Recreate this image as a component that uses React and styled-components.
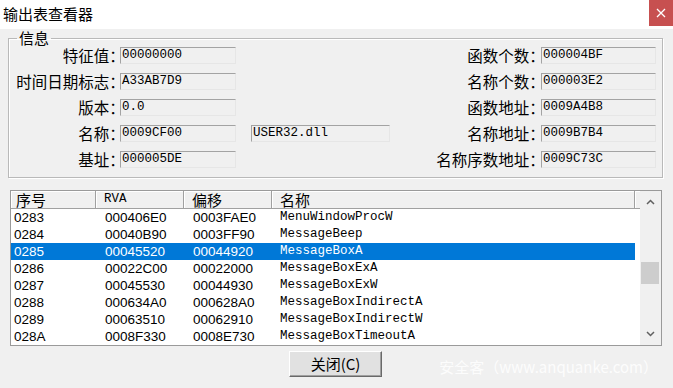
import React from 'react';
import styled, { createGlobalStyle } from 'styled-components';

const GlobalStyle = createGlobalStyle`
  html, body {
    margin: 0;
    padding: 0;
    background: #f0f0f0;
  }
  body {
    font-family: "Noto Sans CJK SC", "Liberation Sans", sans-serif;
    color: #000;
  }
`;

const leftFields = [
  { label: '特征值：', value: '00000000' },
  { label: '时间日期标志：', value: 'A33AB7D9' },
  { label: '版本：', value: '0.0' },
  { label: '名称：', value: '0009CF00', extra: 'USER32.dll' },
  { label: '基址：', value: '000005DE' }
];

const rightFields = [
  { label: '函数个数：', value: '000004BF' },
  { label: '名称个数：', value: '000003E2' },
  { label: '函数地址：', value: '0009A4B8' },
  { label: '名称地址：', value: '0009B7B4' },
  { label: '名称序数地址：', value: '0009C73C' }
];

const columns = ['序号', 'RVA', '偏移', '名称'];

const rows = [
  ['0283', '000406E0', '0003FAE0', 'MenuWindowProcW'],
  ['0284', '00040B90', '0003FF90', 'MessageBeep'],
  ['0285', '00045520', '00044920', 'MessageBoxA'],
  ['0286', '00022C00', '00022000', 'MessageBoxExA'],
  ['0287', '00045530', '00044930', 'MessageBoxExW'],
  ['0288', '000634A0', '000628A0', 'MessageBoxIndirectA'],
  ['0289', '00063510', '00062910', 'MessageBoxIndirectW'],
  ['028A', '0008F330', '0008E730', 'MessageBoxTimeoutA']
];

const SELECTED = 2;

const App = () => {
  return (
    <Window>
      <GlobalStyle />
      <TitleBar>
        <Title>输出表查看器</Title>
        <CloseButton>
          <svg width="10" height="10" viewBox="0 0 10 10">
            <path d="M1 1 L9 9 M9 1 L1 9" stroke="#fff" strokeWidth="1.3" />
          </svg>
        </CloseButton>
      </TitleBar>

      <Body>
        <GroupBox>
          <Legend>信息</Legend>
          <FieldGrid>
            {leftFields.map((f, i) => (
              <React.Fragment key={f.label}>
                <Label $col={1}>{f.label}</Label>
                <ValueBox $col={2}>{f.value}</ValueBox>
                {f.extra && <ValueBox $col={3} $wide>{f.extra}</ValueBox>}
                <Label $col={4}>{rightFields[i].label}</Label>
                <ValueBox $col={5}>{rightFields[i].value}</ValueBox>
              </React.Fragment>
            ))}
          </FieldGrid>
        </GroupBox>

        <ListView>
          <Table>
            <HeaderRow>
              {columns.map((c, i) => (
                <HeaderCell key={c} $first={i === 0} $latin={c === 'RVA'}>
                  {c}
                </HeaderCell>
              ))}
              <HeaderFiller />
            </HeaderRow>
            {rows.map((r, i) => (
              <Row key={r[0]} $selected={i === SELECTED}>
                <Cell $first>{r[0]}</Cell>
                <Cell>{r[1]}</Cell>
                <Cell>{r[2]}</Cell>
                <NameCell>{r[3]}</NameCell>
              </Row>
            ))}
          </Table>
          <ScrollBar>
            <ScrollButton>
              <svg width="9" height="6" viewBox="0 0 9 6">
                <polyline points="1,5 4.5,1.5 8,5" fill="none" stroke="#606060" strokeWidth="1.5" />
              </svg>
            </ScrollButton>
            <Track>
              <Thumb />
            </Track>
            <ScrollButton>
              <svg width="9" height="6" viewBox="0 0 9 6">
                <polyline points="1,1 4.5,4.5 8,1" fill="none" stroke="#606060" strokeWidth="1.5" />
              </svg>
            </ScrollButton>
          </ScrollBar>
        </ListView>

        <ButtonRow>
          <DialogButton>关闭(C)</DialogButton>
        </ButtonRow>
      </Body>

      <Watermark>安全客（www.anquanke.com）</Watermark>
    </Window>
  );
};

const Window = styled.div`
  position: relative;
  width: 673px;
  height: 388px;
  display: flex;
  flex-direction: column;
  background: #f0f0f0;
  overflow: hidden;
`;

const TitleBar = styled.div`
  height: 29px;
  flex: none;
  background: #fff;
  display: flex;
  justify-content: space-between;
  align-items: flex-start;
`;

const Title = styled.div`
  padding: 5px 0 0 3px;
  font-size: 15px;
  line-height: 18px;
`;

const CloseButton = styled.div`
  width: 24px;
  height: 26px;
  background: #c75050;
  display: flex;
  align-items: center;
  justify-content: center;
`;

const Body = styled.div`
  flex: 1;
  display: flex;
  flex-direction: column;
  padding: 1px 10px 0 8px;
`;

const GroupBox = styled.fieldset`
  margin: 0;
  padding: 1px 0 9px 0;
  border: 1px solid #b9b9b9;
  box-shadow: inset 1px 1px #fff, 1px 1px #fff;
  min-inline-size: 0;
`;

const Legend = styled.legend`
  margin-left: 8px;
  padding: 0 2px;
  font-size: 15px;
  line-height: 16px;
`;

const FieldGrid = styled.div`
  display: grid;
  grid-template-columns: 111px 116px 154px 151px 115px;
  grid-auto-rows: 17px;
  row-gap: 9px;
`;

const Label = styled.div`
  grid-column: ${(p) => p.$col};
  justify-self: end;
  padding-right: ${(p) => (p.$col === 1 ? 3 : 4)}px;
  font-size: 15.5px;
  line-height: 17px;
  font-feature-settings: "halt";
  white-space: nowrap;
`;

const ValueBox = styled.div`
  grid-column: ${(p) => p.$col};
  justify-self: end;
  width: ${(p) => (p.$wide ? 139 : p.$col === 5 ? 115 : 116)}px;
  box-sizing: border-box;
  height: 17px;
  padding: 0 1px;
  border: 1px solid;
  border-color: #a3a3a3 #e6e6e6 #e6e6e6 #a3a3a3;
  font-family: "Liberation Mono", monospace;
  font-size: 12.5px;
  line-height: 15px;
  white-space: nowrap;
  overflow: hidden;
`;

const ListView = styled.div`
  margin: 12px 1px 0 2px;
  height: 156px;
  box-sizing: border-box;
  border: 1px solid #9a9a9a;
  background: #fff;
  display: flex;
`;

const Table = styled.div`
  flex: 1;
  display: flex;
  flex-direction: column;
`;

const colTemplate = '85px 88px 88px 363px';

const HeaderRow = styled.div`
  display: grid;
  grid-template-columns: ${colTemplate} 1fr;
  height: 18px;
  flex: none;
`;

const HeaderCell = styled.div`
  box-sizing: border-box;
  padding-left: ${(p) => (p.$first ? 5 : 8)}px;
  background: #f0f0f0;
  border-right: 1px solid #a0a0a0;
  border-bottom: 1px solid #a0a0a0;
  box-shadow: inset 1px 1px #fff;
  font-family: ${(p) =>
    p.$latin ? '"Liberation Mono", monospace' : '"Noto Sans CJK SC", sans-serif'};
  font-size: ${(p) => (p.$latin ? 12.5 : 15)}px;
  line-height: 17px;
  white-space: nowrap;
`;

const HeaderFiller = styled.div`
  background: #f0f0f0;
  border-bottom: 1px solid #a0a0a0;
  box-shadow: inset 1px 1px #fff;
`;

const Row = styled.div`
  display: grid;
  grid-template-columns: ${colTemplate};
  width: 624px;
  height: 17px;
  flex: none;
  align-items: center;
  background: ${(p) => (p.$selected ? '#0078d7' : 'transparent')};
  color: ${(p) => (p.$selected ? '#fff' : '#000')};
`;

const Cell = styled.div`
  padding-left: ${(p) => (p.$first ? 3 : 9)}px;
  font-family: "Liberation Sans", sans-serif;
  font-size: 13.5px;
  line-height: 17px;
  white-space: nowrap;
`;

const NameCell = styled.div`
  padding-left: 8px;
  font-family: "Liberation Mono", monospace;
  font-size: 12.5px;
  line-height: 17px;
  white-space: nowrap;
`;

const ScrollBar = styled.div`
  width: 21px;
  flex: none;
  background: #f0f0f0;
  display: flex;
  flex-direction: column;
`;

const ScrollButton = styled.div`
  height: 22px;
  flex: none;
  display: flex;
  align-items: center;
  justify-content: center;
`;

const Track = styled.div`
  flex: 1;
  padding: 49px 2px 0 1px;
`;

const Thumb = styled.div`
  height: 22px;
  background: #cdcdcd;
`;

const ButtonRow = styled.div`
  display: flex;
  justify-content: center;
  margin-top: 5px;
`;

const DialogButton = styled.div`
  width: 93px;
  height: 26px;
  box-sizing: border-box;
  background: #e1e1e1;
  border: 1px solid;
  border-color: #fff #696969 #696969 #fff;
  box-shadow: inset -1px -1px #a0a0a0;
  display: flex;
  align-items: center;
  justify-content: center;
  font-size: 15px;
  line-height: 18px;
`;

const Watermark = styled.div`
  position: absolute;
  right: 15px;
  top: 357px;
  font-family: "Noto Sans CJK SC", sans-serif;
  font-size: 15px;
  line-height: 20px;
  color: rgba(255, 255, 255, 0.85);
  white-space: nowrap;
`;

export default App;
